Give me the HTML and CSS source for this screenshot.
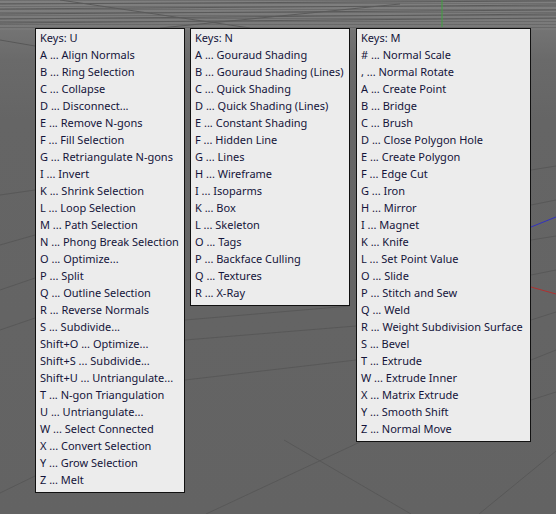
FILE: index.html
```html
<!DOCTYPE html>
<html>
<head>
<meta charset="utf-8">
<link rel="stylesheet" href="styles.css">
</head>
<body>
<div class="viewport">
  <svg class="scene" width="556" height="514" viewBox="0 0 556 514">
    <g stroke="#5a5a5a" stroke-width="1" fill="none">
      <line x1="0" y1="4" x2="556" y2="1"/>
      <line x1="0" y1="9" x2="556" y2="5"/>
      <line x1="0" y1="14" x2="556" y2="10"/>
      <line x1="0" y1="19" x2="556" y2="14"/>
      <line x1="0" y1="23" x2="556" y2="18"/>
      <line x1="60" y1="0" x2="250" y2="28"/>
      <line x1="160" y1="28" x2="400" y2="4"/>
    </g>
    <g stroke="#585858" stroke-width="1" fill="none">
      <line x1="284" y1="440" x2="411" y2="514"/>
      <line x1="206" y1="514" x2="360" y2="442"/>
      <line x1="556" y1="451" x2="479" y2="514"/>
      <line x1="0" y1="493" x2="35" y2="476"/>
      <line x1="0" y1="195" x2="35" y2="190"/>
      <line x1="0" y1="245" x2="35" y2="235"/>
      <line x1="0" y1="290" x2="35" y2="278"/>
      <line x1="0" y1="330" x2="35" y2="318"/>
      <line x1="0" y1="40" x2="35" y2="46"/>
      <line x1="531" y1="170" x2="556" y2="166"/>
      <line x1="531" y1="205" x2="556" y2="200"/>
      <line x1="531" y1="240" x2="556" y2="236"/>
      <line x1="531" y1="275" x2="556" y2="270"/>
      <line x1="531" y1="320" x2="556" y2="312"/>
      <line x1="531" y1="360" x2="556" y2="350"/>
      <line x1="531" y1="400" x2="556" y2="392"/>
      <line x1="185" y1="320" x2="350" y2="306"/>
      <line x1="185" y1="340" x2="356" y2="326"/>
      <line x1="185" y1="380" x2="356" y2="360"/>
    </g>
    <line x1="442" y1="0" x2="442" y2="27" stroke="#3fa33f" stroke-width="1"/>
    <line x1="531" y1="227" x2="556" y2="217" stroke="#3030c0" stroke-width="1"/>
    <line x1="531" y1="287" x2="556" y2="294" stroke="#b03030" stroke-width="1"/>
  </svg>

  <div class="menus">
    <div class="menu menu-u">
      <div class="row">Keys: U</div>
      <div class="row">A ... Align Normals</div>
      <div class="row">B ... Ring Selection</div>
      <div class="row">C ... Collapse</div>
      <div class="row">D ... Disconnect...</div>
      <div class="row">E ... Remove N-gons</div>
      <div class="row">F ... Fill Selection</div>
      <div class="row">G ... Retriangulate N-gons</div>
      <div class="row">I ... Invert</div>
      <div class="row">K ... Shrink Selection</div>
      <div class="row">L ... Loop Selection</div>
      <div class="row">M ... Path Selection</div>
      <div class="row">N ... Phong Break Selection</div>
      <div class="row">O ... Optimize...</div>
      <div class="row">P ... Split</div>
      <div class="row">Q ... Outline Selection</div>
      <div class="row">R ... Reverse Normals</div>
      <div class="row">S ... Subdivide...</div>
      <div class="row">Shift+O ... Optimize...</div>
      <div class="row">Shift+S ... Subdivide...</div>
      <div class="row">Shift+U ... Untriangulate...</div>
      <div class="row">T ... N-gon Triangulation</div>
      <div class="row">U ... Untriangulate...</div>
      <div class="row">W ... Select Connected</div>
      <div class="row">X ... Convert Selection</div>
      <div class="row">Y ... Grow Selection</div>
      <div class="row">Z ... Melt</div>
    </div>
    <div class="menu menu-n">
      <div class="row">Keys: N</div>
      <div class="row">A ... Gouraud Shading</div>
      <div class="row">B ... Gouraud Shading (Lines)</div>
      <div class="row">C ... Quick Shading</div>
      <div class="row">D ... Quick Shading (Lines)</div>
      <div class="row">E ... Constant Shading</div>
      <div class="row">F ... Hidden Line</div>
      <div class="row">G ... Lines</div>
      <div class="row">H ... Wireframe</div>
      <div class="row">I ... Isoparms</div>
      <div class="row">K ... Box</div>
      <div class="row">L ... Skeleton</div>
      <div class="row">O ... Tags</div>
      <div class="row">P ... Backface Culling</div>
      <div class="row">Q ... Textures</div>
      <div class="row">R ... X-Ray</div>
    </div>
    <div class="menu menu-m">
      <div class="row">Keys: M</div>
      <div class="row"># ... Normal Scale</div>
      <div class="row">, ... Normal Rotate</div>
      <div class="row">A ... Create Point</div>
      <div class="row">B ... Bridge</div>
      <div class="row">C ... Brush</div>
      <div class="row">D ... Close Polygon Hole</div>
      <div class="row">E ... Create Polygon</div>
      <div class="row">F ... Edge Cut</div>
      <div class="row">G ... Iron</div>
      <div class="row">H ... Mirror</div>
      <div class="row">I ... Magnet</div>
      <div class="row">K ... Knife</div>
      <div class="row">L ... Set Point Value</div>
      <div class="row">O ... Slide</div>
      <div class="row">P ... Stitch and Sew</div>
      <div class="row">Q ... Weld</div>
      <div class="row">R ... Weight Subdivision Surface</div>
      <div class="row">S ... Bevel</div>
      <div class="row">T ... Extrude</div>
      <div class="row">W ... Extrude Inner</div>
      <div class="row">X ... Matrix Extrude</div>
      <div class="row">Y ... Smooth Shift</div>
      <div class="row">Z ... Normal Move</div>
    </div>
  </div>
</div>
</body>
</html>
```

FILE: styles.css
```css
html, body {
  margin: 0;
  padding: 0;
}
body {
  width: 556px;
  height: 514px;
  overflow: hidden;
  font-family: "Noto Sans", "DejaVu Sans", sans-serif;
}
.viewport {
  position: relative;
  width: 556px;
  height: 514px;
  background:
    repeating-linear-gradient(180deg, rgba(0,0,0,0.1) 0px, rgba(0,0,0,0.1) 1px, rgba(255,255,255,0.04) 1px, rgba(255,255,255,0.04) 3px) 0 0 / 100% 30px no-repeat,
    linear-gradient(180deg, #7a7a7a 0px, #747474 28px, #6a6a6a 60px, #656565 120px, #636363 514px);
}
.scene {
  position: absolute;
  left: 0;
  top: 0;
}
.menus {
  position: relative;
  display: flex;
  align-items: flex-start;
  padding: 28px 0 0 35px;
}
.menu {
  box-sizing: border-box;
  background: #ececec;
  border: 1px solid #111;
  padding: 0 0 4px 4px;
  color: #14143a;
  font-size: 11px;
}
.menu-u { width: 150px; }
.menu-n { width: 160px; margin-left: 5px; }
.menu-m { width: 175px; margin-left: 6px; }
.row {
  height: 17px;
  line-height: 17px;
  white-space: nowrap;
}
```
